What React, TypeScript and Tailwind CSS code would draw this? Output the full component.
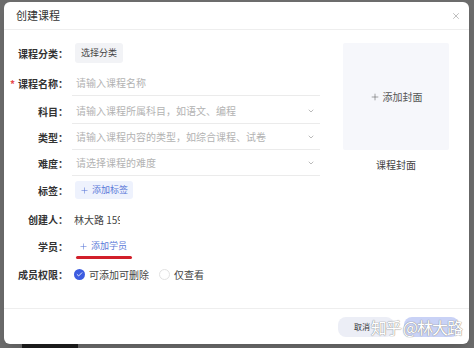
import { X, ChevronDown, Plus, Check } from "lucide-react";

const font = { fontFamily: '"Noto Sans CJK SC", "Noto Sans", sans-serif' };

function Label({ text, required }: { text: string; required?: boolean }) {
  return (
    <div className="w-[64px] shrink-0 text-right text-[10px] font-semibold text-[#333]">
      {required && <span className="mr-[3px] text-[#e5484d]">*</span>}
      {text}：
    </div>
  );
}

function InputRow({ label, placeholder, required, select }: { label: string; placeholder: string; required?: boolean; select?: boolean }) {
  return (
    <div className="flex h-[26px] items-center">
      <Label text={label} required={required} />
      <div className="ml-[4px] flex h-full flex-1 items-center border-b border-[#ebebeb] pl-[4px] pr-[5px]">
        <span className="flex-1 whitespace-nowrap text-[10px] text-[#b3b3b3]">{placeholder}</span>
        {select && <ChevronDown size={8} strokeWidth={2} className="text-[#999]" />}
      </div>
    </div>
  );
}

export default function App() {
  return (
    <div className="h-[348px] w-[474px] overflow-hidden bg-[#6c6c6c] pl-[4px] pr-[5px] pt-[2px]" style={font}>
      <div className="flex h-[342px] flex-col rounded-[6px] bg-white shadow-lg">
        {/* header */}
        <div className="flex h-[28px] items-center justify-between border-b border-[#eeeeee] pl-[12px] pr-[8px]">
          <span className="text-[11px] text-[#333]">创建课程</span>
          <X size={10} strokeWidth={1.5} className="text-[#999]" />
        </div>

        {/* body */}
        <div className="flex flex-1 pt-[12px]">
          <div className="flex w-[316px] flex-col">
            <div className="flex h-[22px] items-center">
              <Label text="课程分类" />
              <span className="ml-[7px] flex h-[20px] items-center rounded-[3px] bg-[#f2f3f6] px-[6px] text-[9px] text-[#444]">选择分类</span>
            </div>
            <div className="mt-[6px] pb-[2px]">
              <InputRow label="课程名称" placeholder="请输入课程名称" required />
            </div>
            <InputRow label="科目" placeholder="请输入课程所属科目，如语文、编程" select />
            <InputRow label="类型" placeholder="请输入课程内容的类型，如综合课程、试卷" select />
            <InputRow label="难度" placeholder="请选择课程的难度" select />
            <div className="mt-[1px] flex h-[26px] items-center">
              <Label text="标签" />
              <span className="ml-[7px] flex h-[18px] items-center gap-[3px] rounded-[3px] bg-[#eef2fd] px-[5px] text-[9px] text-[#5a78d8]">
                <Plus size={9} strokeWidth={1.5} />
                添加标签
              </span>
            </div>
            <div className="mt-[3px] flex h-[26px] items-center">
              <Label text="创建人" />
              <span className="ml-[6px] w-[46px] overflow-hidden whitespace-nowrap text-[10px] text-[#444]">林大路 159</span>
            </div>
            <div className="mt-[1px] flex h-[26px] items-center">
              <Label text="学员" />
              <div className="relative ml-[7px] flex items-center gap-[3px] px-[4px] text-[9px] text-[#5a78d8]">
                <Plus size={9} strokeWidth={1.5} />
                添加学员
                <span className="absolute -bottom-[6px] left-[1px] h-[3px] w-[56px] rounded-full bg-[#d11f2a]" />
              </div>
            </div>
            <div className="mt-[2px] flex h-[26px] items-center">
              <Label text="成员权限" />
              <div className="ml-[6px] flex items-center gap-[4px] text-[10px] text-[#444]">
                <span className="flex h-[11px] w-[11px] items-center justify-center rounded-full bg-[#3d5ce0]">
                  <Check size={7} strokeWidth={3} className="text-white" />
                </span>
                可添加可删除
              </div>
              <div className="ml-[10px] flex items-center gap-[4px] text-[10px] text-[#444]">
                <span className="h-[11px] w-[11px] rounded-full border border-[#e2e2e2]" />
                仅查看
              </div>
            </div>
          </div>

          <div className="ml-[23px] flex flex-col items-center pt-[1px]">
            <div className="flex h-[107px] w-[106px] items-center justify-center gap-[3px] rounded-[2px] bg-[#f6f7fb] text-[10px] text-[#555]">
              <Plus size={10} strokeWidth={1.3} />
              添加封面
            </div>
            <span className="mt-[7px] text-[10px] text-[#444]">课程封面</span>
          </div>
        </div>

        {/* footer */}
        <div className="relative flex h-[36px] items-center justify-end gap-[10px] border-t border-[#eeeeee] pr-[10px]">
          <span className="flex h-[20px] w-[56px] items-center justify-start rounded-[8px] bg-[#eceef6] pl-[16px] text-[8px] text-[#333]">取消</span>
          <span className="h-[20px] w-[55px] rounded-[8px] bg-[#c9d2f6]" />
          <span className="absolute right-[7px] top-[8px] flex gap-[2px] whitespace-nowrap text-[16px] leading-[20px] tracking-[-1px] text-white [text-shadow:0_0_1px_#888,0_0_1px_#888]">
            <span>知乎</span>
            <span>@林大路</span>
          </span>
        </div>
      </div>
      <div className="ml-[18px] h-[4px] w-[56px] bg-[#1a1a1a]" />
    </div>
  );
}
